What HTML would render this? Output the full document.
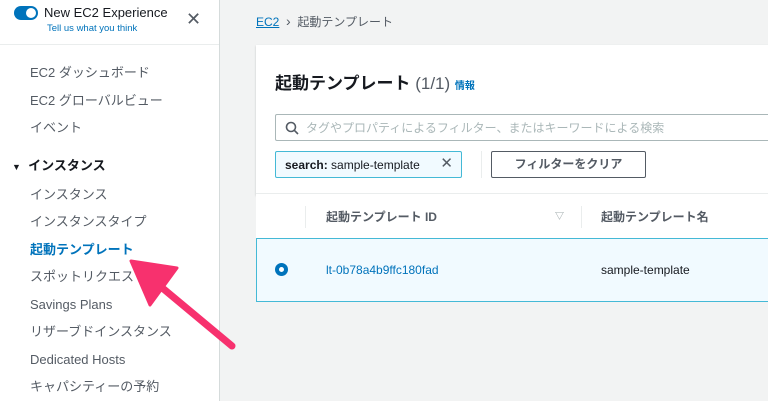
<!DOCTYPE html>
<html><head><meta charset="utf-8"><style>
*{margin:0;padding:0;box-sizing:border-box}
body{width:768px;height:401px;overflow:hidden;background:#f2f3f3;font-family:"Liberation Sans","Noto Sans CJK JP",sans-serif;position:relative;color:#16191f}
.side{position:absolute;left:0;top:0;width:220px;height:401px;background:#fff;border-right:1px solid #d5dbdb}
.top{height:45px;border-bottom:1px solid #eaeded;position:relative}
.tog{position:absolute;left:14px;top:6px;width:24px;height:14px;border-radius:7px;background:#0073bb}
.tog:after{content:"";position:absolute;right:2px;top:2px;width:10px;height:10px;border-radius:50%;background:#fff}
.nt{position:absolute;left:44px;top:5px;font-size:13px;color:#16191f;line-height:16px}
.tl{position:absolute;left:47px;top:23px;font-size:9.5px;color:#0073bb;line-height:12px}
.x{position:absolute;left:186px;top:9px;font-size:18px;color:#545b64;line-height:20px}
.nav{position:absolute;left:30px;font-size:13px;color:#545b64;line-height:16px;white-space:nowrap}
.main .bc{position:absolute;left:256px;top:12px;font-size:12px;color:#545b64;line-height:16px}
.card{position:absolute;left:256px;top:45px;width:520px;height:150px;background:#fff;box-shadow:0 1px 2px rgba(0,0,0,.2)}
.row{position:absolute;left:256px;top:238px;width:520px;height:64px;background:#f1faff;border:1px solid #44b9d6}
.hdr{position:absolute;left:256px;top:193px;width:520px;height:45px;background:#fff}
</style></head><body>
<div class="side">
<div class="top"><div class="tog"></div><div class="nt">New EC2 Experience</div><div class="tl">Tell us what you think</div><div class="x">✕</div></div>
<div class="nav" style="top:65px">EC2 ダッシュボード</div>
<div class="nav" style="top:93px">EC2 グローバルビュー</div>
<div class="nav" style="top:120px">イベント</div>
<div class="nav" style="left:12px;top:158px;font-weight:bold;color:#16191f"><span style="font-size:9px">▼</span>&nbsp; インスタンス</div>
<div class="nav" style="top:187px">インスタンス</div>
<div class="nav" style="top:214px">インスタンスタイプ</div>
<div class="nav" style="top:242px;color:#0073bb;font-weight:bold">起動テンプレート</div>
<div class="nav" style="top:269px">スポットリクエスト</div>
<div class="nav" style="top:297px">Savings Plans</div>
<div class="nav" style="top:324px">リザーブドインスタンス</div>
<div class="nav" style="top:352px">Dedicated Hosts</div>
<div class="nav" style="top:379px">キャパシティーの予約</div>
</div>
<div class="main">
<div class="bc" style="top:13px"><span style="color:#0073bb;text-decoration:underline">EC2</span> &nbsp;<span style="font-size:14px">›</span>&nbsp; 起動テンプレート</div>
<div class="card">
<div style="position:absolute;left:19px;top:29px;font-size:17px;font-weight:bold;line-height:20px">起動テンプレート <span style="font-weight:normal;color:#545b64">(1/1)</span> <span style="font-size:10px;color:#0073bb">情報</span></div>
<div style="position:absolute;left:19px;top:69px;width:510px;height:27px;border:1px solid #aab7b8;border-radius:2px;font-size:12px;color:#aab7b8;padding:5px 0 0 30px;line-height:16px">タグやプロパティによるフィルター、またはキーワードによる検索
<svg style="position:absolute;left:9px;top:6px" width="14" height="14"><circle cx="6" cy="6" r="4.5" fill="none" stroke="#545b64" stroke-width="1.6"/><line x1="9.3" y1="9.3" x2="13" y2="13" stroke="#545b64" stroke-width="1.6"/></svg></div>
<div style="position:absolute;left:19px;top:106px;width:187px;height:27px;border:1px solid #44b9d6;background:#f1faff;border-radius:2px;font-size:12px;padding:5px 0 0 9px;line-height:16px"><b>search:</b> sample-template <span style="position:absolute;right:8px;top:4px;font-size:15px;color:#545b64">✕</span></div>
<div style="position:absolute;left:225px;top:106px;width:1px;height:27px;background:#eaeded"></div>
<div style="position:absolute;left:235px;top:106px;width:155px;height:27px;border:1px solid #545b64;border-radius:2px;font-size:12px;font-weight:bold;color:#545b64;text-align:center;line-height:25px">フィルターをクリア</div>
</div>
<div class="hdr" style="border-top:1px solid #eaeded">
<div style="position:absolute;left:49px;top:12px;width:1px;height:22px;background:#eaeded"></div>
<div style="position:absolute;left:70px;top:15px;font-size:12px;font-weight:bold;color:#545b64;line-height:16px">起動テンプレート ID</div>
<div style="position:absolute;left:299px;top:15px;font-size:9px;color:#879596">▽</div>
<div style="position:absolute;left:325px;top:12px;width:1px;height:22px;background:#eaeded"></div>
<div style="position:absolute;left:345px;top:15px;font-size:12px;font-weight:bold;color:#545b64;line-height:16px">起動テンプレート名</div>
</div>
<div class="row">
<div style="position:absolute;left:18px;top:24px;width:13px;height:13px;border-radius:50%;border:4px solid #0073bb;background:#fff"></div>
<div style="position:absolute;left:69px;top:23px;font-size:12px;color:#0073bb;line-height:16px">lt-0b78a4b9ffc180fad</div>
<div style="position:absolute;left:344px;top:23px;font-size:12px;line-height:16px">sample-template</div>
</div>
</div>
<svg style="position:absolute;left:0;top:0" width="768" height="401"><line x1="232" y1="346" x2="160" y2="286" stroke="#f7316e" stroke-width="7" stroke-linecap="round"/><polygon points="131,261 177,268 150,305" fill="#f7316e" stroke="#f7316e" stroke-width="3" stroke-linejoin="round"/></svg>
</body></html>
